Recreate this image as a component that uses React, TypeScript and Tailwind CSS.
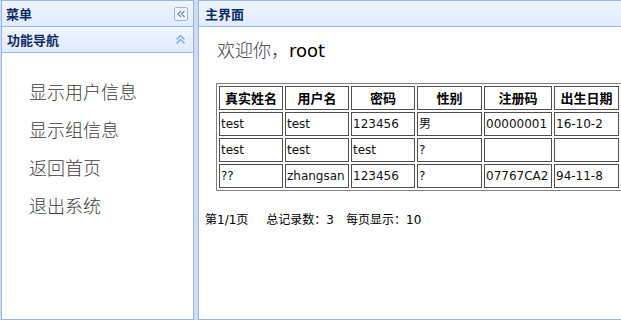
import React from "react";

const hdr =
  "bg-[linear-gradient(to_bottom,#eff5ff,#e0ecff)] text-[13px] font-bold text-[#0e2d5f] font-['Noto_Sans_CJK_SC',sans-serif]";

const cols = [64, 64, 64, 65, 68, 65, 80];
const heads = ["真实姓名", "用户名", "密码", "性别", "注册码", "出生日期", "操作"];
const rows = [
  ["test", "test", "123456", "男", "00000001", "16-10-2", ""],
  ["test", "test", "test", "?", "", "", ""],
  ["??", "zhangsan", "123456", "?", "07767CA2", "94-11-8", ""],
];

export default function App() {
  return (
    <div className="w-[621px] h-[320px] flex bg-[#cddcf3] overflow-hidden pl-[1px]">
      {/* West panel */}
      <div className="w-[193px] shrink-0 flex flex-col border border-[#95b8e7] bg-white">
        <div className={`${hdr} h-[26px] border-b border-[#95b8e7] flex items-center pl-[4px] pr-[5px] justify-between`}>
          <span>菜单</span>
          <span className="w-[14px] h-[14px] border border-[#a3b6cf] rounded-[2px] bg-[#f3f7fd] flex items-center justify-center">
            <svg width="10" height="10" viewBox="0 0 10 10" fill="none" stroke="#6d8db8" strokeWidth="1.3">
              <path d="M5 2 L2 5 L5 8 M8.5 2 L5.5 5 L8.5 8" />
            </svg>
          </span>
        </div>
        <div className={`${hdr} h-[26px] border-b border-[#95b8e7] flex items-center pl-[5px] pr-[7px] justify-between`}>
          <span>功能导航</span>
          <svg width="11" height="11" viewBox="0 0 11 11" fill="none" stroke="#7aa6dd" strokeWidth="1.4">
            <path d="M1.5 5.5 L5.5 1.5 L9.5 5.5 M1.5 9.5 L5.5 5.5 L9.5 9.5" />
          </svg>
        </div>
        <div className="flex-1 pt-[19px] pl-[27px] text-[18px] leading-[38px] text-[#3c3c3c] font-light font-['Noto_Sans_CJK_SC',sans-serif]">
          <div>显示用户信息</div>
          <div>显示组信息</div>
          <div>返回首页</div>
          <div>退出系统</div>
        </div>
      </div>

      {/* splitter */}
      <div className="w-[4px] shrink-0" />

      {/* Center panel */}
      <div className="w-[424px] shrink-0 flex flex-col border border-[#95b8e7] bg-white">
        <div className={`${hdr} h-[26px] border-b border-[#95b8e7] flex items-center pl-[6px]`}>
          <span>主界面</span>
        </div>
        <div className="flex-1">
          <div className="ml-[18px] mt-[10px] h-[24px] leading-[24px] text-[18px] font-['Noto_Sans_CJK_SC',sans-serif]">
            <span className="text-[#3c3c3c] font-light">欢迎你，</span>
            <span className="text-black font-['DejaVu_Sans',sans-serif]">root</span>
          </div>
          <table className="ml-[17px] mt-[22px] border-separate border-spacing-[2px] border border-[#808080]">
            <tbody>
              <tr>
                {heads.map((h, i) => (
                  <th
                    key={i}
                    style={{ width: cols[i], minWidth: cols[i], maxWidth: cols[i] }}
                    className="h-[24px] p-0 border border-[#505050] text-center text-[13px] font-bold text-black font-['Noto_Sans_CJK_SC',sans-serif] whitespace-nowrap overflow-hidden"
                  >
                    {i < 6 ? h : ""}
                  </th>
                ))}
              </tr>
              {rows.map((r, ri) => (
                <tr key={ri}>
                  {r.map((c, ci) => (
                    <td
                      key={ci}
                      style={{ width: cols[ci], minWidth: cols[ci], maxWidth: cols[ci] }}
                      className="h-[24px] py-0 px-[1px] border border-[#505050] text-left text-[12px] text-[#111] font-['DejaVu_Sans','Noto_Sans_CJK_SC',sans-serif] whitespace-nowrap overflow-hidden"
                    >
                      {c}
                    </td>
                  ))}
                </tr>
              ))}
            </tbody>
          </table>
          <div className="ml-[6px] mt-[20px] leading-[16px] text-[12px] text-black font-['Noto_Sans_CJK_SC',sans-serif] whitespace-pre">
            <span>第<span className="font-['DejaVu_Sans']">1/1</span>页</span>
            <span className="ml-[18px]">总记录数：<span className="font-['DejaVu_Sans']">3</span></span>
            <span className="ml-[12px]">每页显示：<span className="font-['DejaVu_Sans']">10</span></span>
          </div>
        </div>
      </div>
    </div>
  );
}
